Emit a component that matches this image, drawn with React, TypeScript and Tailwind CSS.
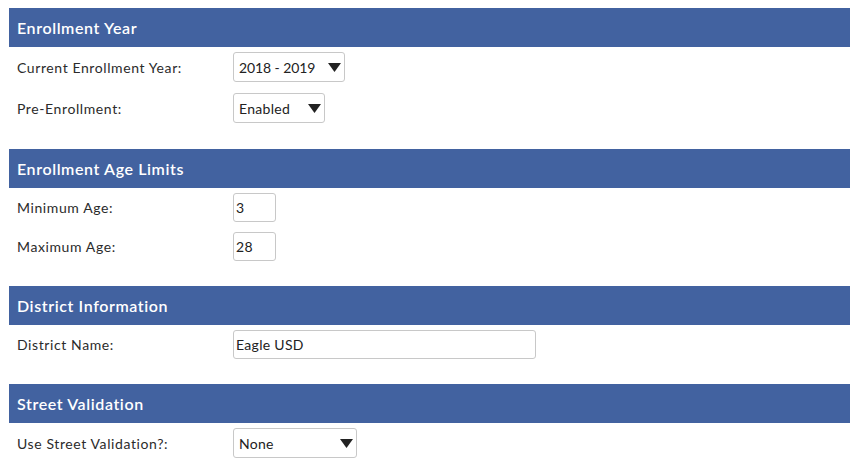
import React from "react";

const font = { fontFamily: "Lato, 'Open Sans', sans-serif" };

function Caret() {
  return (
    <svg width="13" height="9" viewBox="0 0 13 9" className="shrink-0">
      <polygon points="0,0 13,0 6.5,9" fill="#222" />
    </svg>
  );
}

function SelectBox({ value, width, tight = false }: { value: string; width: string; tight?: boolean }) {
  return (
    <div
      className={`${width} h-[30px] border border-[#c8c8c8] rounded-[3px] bg-white flex items-center justify-between pl-[5px] pr-[3px] text-[14px] text-[#222] ${tight ? "tracking-[-0.1px]" : "tracking-[0.3px]"}`}
    >
      <span>{value}</span>
      <Caret />
    </div>
  );
}

function InputBox({ value, width }: { value: string; width: string }) {
  return (
    <div
      className={`${width} h-[29px] border border-[#c8c8c8] rounded-[3px] bg-white flex items-center pl-[2px] text-[14px] text-[#222] tracking-[0.3px]`}
    >
      {value}
    </div>
  );
}

function Row({ label, children, className = "" }: { label: string; children: React.ReactNode; className?: string }) {
  return (
    <div className={`flex items-center ${className}`}>
      <div className="w-[224px] pl-[8px] text-[14px] text-[#2b2b2b] tracking-[0.6px]">{label}</div>
      {children}
    </div>
  );
}

function Header({ title }: { title: string }) {
  return (
    <div className="h-[39px] bg-[#4262a0] flex items-center pl-[8px] text-white text-[16px] font-semibold tracking-[0.6px]">
      {title}
    </div>
  );
}

export default function App() {
  return (
    <div className="w-[858px] h-[467px] bg-white pt-[8px] pl-[9px] pr-[8px] overflow-hidden" style={font}>
      <section>
        <Header title="Enrollment Year" />
        <div className="pt-[5px] pb-[26px] flex flex-col gap-[11px]">
          <Row label="Current Enrollment Year:">
            <SelectBox value="2018 - 2019" width="w-[112px]" tight />
          </Row>
          <Row label="Pre-Enrollment:">
            <SelectBox value="Enabled" width="w-[92px]" />
          </Row>
        </div>
      </section>
      <section>
        <Header title="Enrollment Age Limits" />
        <div className="pt-[5px] pb-[25px] flex flex-col gap-[10px]">
          <Row label="Minimum Age:">
            <InputBox value="3" width="w-[43px]" />
          </Row>
          <Row label="Maximum Age:">
            <InputBox value="28" width="w-[43px]" />
          </Row>
        </div>
      </section>
      <section>
        <Header title="District Information" />
        <div className="pt-[5px] pb-[25px] flex flex-col">
          <Row label="District Name:">
            <InputBox value="Eagle USD" width="w-[303px]" />
          </Row>
        </div>
      </section>
      <section>
        <Header title="Street Validation" />
        <div className="pt-[5px] flex flex-col">
          <Row label="Use Street Validation?:">
            <SelectBox value="None" width="w-[124px]" />
          </Row>
        </div>
      </section>
    </div>
  );
}
